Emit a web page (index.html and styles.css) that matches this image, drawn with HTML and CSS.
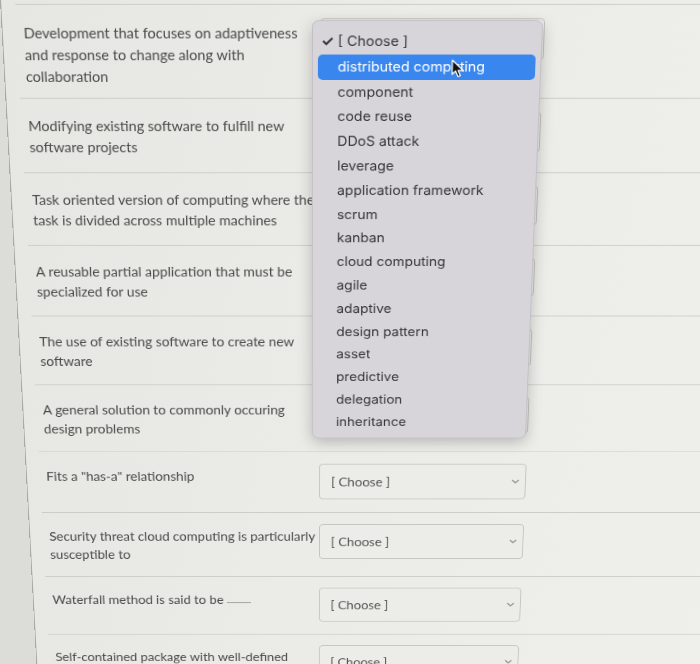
FILE: index.html
```html
<!DOCTYPE html>
<html lang="en">
<head>
    <meta charset="UTF-8">
    <meta name="viewport" content="width=device-width, initial-scale=1.0">
    <title>Matching Quiz</title>
    <link rel="stylesheet" href="styles.css">
</head>
<body>
    <div class="sheet">
        <div class="quiz">
            <div class="row">
                <div class="question">Development that focuses on adaptiveness and response to change along with collaboration</div>
                <div class="pick"><span>[ Choose ]</span><svg class="chev" width="9" height="6" viewBox="0 0 9 6"><polyline points="1,1 4.5,4.5 8,1"/></svg></div>
            </div>
            <div class="row">
                <div class="question">Modifying existing software to fulfill new software projects</div>
                <div class="pick"><span>[ Choose ]</span><svg class="chev" width="9" height="6" viewBox="0 0 9 6"><polyline points="1,1 4.5,4.5 8,1"/></svg></div>
            </div>
            <div class="row">
                <div class="question">Task oriented version of computing where the task is divided across multiple machines</div>
                <div class="pick"><span>[ Choose ]</span><svg class="chev" width="9" height="6" viewBox="0 0 9 6"><polyline points="1,1 4.5,4.5 8,1"/></svg></div>
            </div>
            <div class="row">
                <div class="question">A reusable partial application that must be specialized for use</div>
                <div class="pick"><span>[ Choose ]</span><svg class="chev" width="9" height="6" viewBox="0 0 9 6"><polyline points="1,1 4.5,4.5 8,1"/></svg></div>
            </div>
            <div class="row">
                <div class="question">The use of existing software to create new software</div>
                <div class="pick"><span>[ Choose ]</span><svg class="chev" width="9" height="6" viewBox="0 0 9 6"><polyline points="1,1 4.5,4.5 8,1"/></svg></div>
            </div>
            <div class="row">
                <div class="question">A general solution to commonly occuring design problems</div>
                <div class="pick"><span>[ Choose ]</span><svg class="chev" width="9" height="6" viewBox="0 0 9 6"><polyline points="1,1 4.5,4.5 8,1"/></svg></div>
            </div>
            <div class="row">
                <div class="question">Fits a "has-a" relationship</div>
                <div class="pick"><span>[ Choose ]</span><svg class="chev" width="9" height="6" viewBox="0 0 9 6"><polyline points="1,1 4.5,4.5 8,1"/></svg></div>
            </div>
            <div class="row">
                <div class="question">Security threat cloud computing is particularly susceptible to</div>
                <div class="pick"><span>[ Choose ]</span><svg class="chev" width="9" height="6" viewBox="0 0 9 6"><polyline points="1,1 4.5,4.5 8,1"/></svg></div>
            </div>
            <div class="row">
                <div class="question">Waterfall method is said to be <span class="blank"></span></div>
                <div class="pick"><span>[ Choose ]</span><svg class="chev" width="9" height="6" viewBox="0 0 9 6"><polyline points="1,1 4.5,4.5 8,1"/></svg></div>
            </div>
            <div class="row">
                <div class="question">Self-contained package with well-defined interfaces</div>
                <div class="pick"><span>[ Choose ]</span><svg class="chev" width="9" height="6" viewBox="0 0 9 6"><polyline points="1,1 4.5,4.5 8,1"/></svg></div>
            </div>
        </div>

        <div class="menu">
            <div class="menu-item"><span class="tick">&#10003;</span>[ Choose ]</div>
            <div class="menu-item active">distributed computing</div>
            <div class="menu-item">component</div>
            <div class="menu-item">code reuse</div>
            <div class="menu-item">DDoS attack</div>
            <div class="menu-item">leverage</div>
            <div class="menu-item">application framework</div>
            <div class="menu-item">scrum</div>
            <div class="menu-item">kanban</div>
            <div class="menu-item">cloud computing</div>
            <div class="menu-item">agile</div>
            <div class="menu-item">adaptive</div>
            <div class="menu-item">design pattern</div>
            <div class="menu-item">asset</div>
            <div class="menu-item">predictive</div>
            <div class="menu-item">delegation</div>
            <div class="menu-item">inheritance</div>
        </div>

        <svg class="cursor" width="14" height="21" viewBox="0 0 14 21">
            <path d="M1 1 L1 16 L4.5 12.5 L7 18.5 L9.5 17.5 L7 11.8 L12 11.8 Z" fill="#111" stroke="#fff" stroke-width="1.2" stroke-linejoin="round"/>
        </svg>
    </div>
</body>
</html>
```

FILE: styles.css
```css
html, body {
    height: 664px;
    overflow: hidden;
}

body {
    margin: 0;
    background: #dcdcd8;
    font-family: Lato, "Open Sans", sans-serif;
    color: #4a4a4a;
}

.sheet {
    position: relative;
    width: 780px;
    transform-origin: 310px 0;
    transform: perspective(1515px) rotateX(-15deg);
}

.quiz {
    margin-left: 0;
    padding-top: 4px;
    border-left: 1px solid #a9a9a5;
    background: linear-gradient(100deg, #e6e6e2 0%, #ebebe8 45%, #efefec 100%);
}

.row {
    display: flex;
    align-items: flex-start;
    margin-left: 14px;
    padding: 14px 0 16px 7px;
    border-bottom: 1px solid #cbcbc7;
}

.row:first-child {
    padding-bottom: 11px;
    border-top: 1px solid #cbcbc7;
}

.question {
    width: 298px;
    padding-top: 4px;
    font-size: 14.6px;
    line-height: 23px;
}

.blank {
    display: inline-block;
    width: 27px;
    border-bottom: 1px solid #8a8a8a;
    vertical-align: 1px;
}

.pick {
    display: flex;
    align-items: center;
    justify-content: space-between;
    width: 226px;
    height: 44px;
    box-sizing: border-box;
    padding: 0 6px 0 12px;
    border: 1px solid #c4c4c0;
    border-radius: 4px;
    background: #ecece9;
    font-size: 14.5px;
    color: #555;
}

.chev {
    fill: none;
    stroke: #8a8a8a;
    stroke-width: 1.3;
}

.menu {
    position: absolute;
    left: 312px;
    top: 21px;
    width: 232px;
    box-sizing: border-box;
    padding: 8px 5px 5px;
    background: #d7d5d9;
    border: 1px solid #c3c1c5;
    border-radius: 7px;
    box-shadow: 0 5px 16px rgba(0, 0, 0, 0.22);
    font-family: Inter, "Noto Sans", sans-serif;
    font-size: 14.4px;
    color: #38363a;
}

.menu-item {
    position: relative;
    height: 26.8px;
    line-height: 26.8px;
    padding-left: 20px;
    border-radius: 5px;
}

.menu-item.active {
    background: #3a86ef;
    color: #fff;
}

.tick {
    position: absolute;
    left: 3px;
    font-size: 15px;
    font-weight: bold;
}

.cursor {
    position: absolute;
    left: 453px;
    top: 62px;
}
```
